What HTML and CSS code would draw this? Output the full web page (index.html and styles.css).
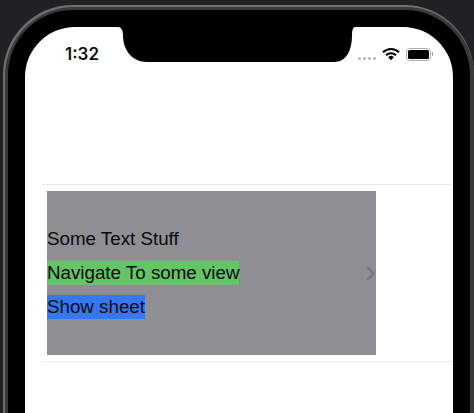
FILE: index.html
```html
<!DOCTYPE html>
<html lang="en">
<head>
<meta charset="utf-8">
<title>List row</title>
<link rel="stylesheet" href="styles.css">
</head>
<body>
<div class="device">
  <div class="bezel">
    <div class="screen">
      <svg class="notch" width="237" height="35" viewBox="0 0 237 35">
        <path d="M0 0H237C235 0 234 3 234 8C234 24 228 35 216 35H29C15 35 5 24 5 8C5 3 3 0 0 0Z" fill="#000"/>
      </svg>
      <div class="status">
        <span class="time">1:32</span>
        <div class="status-icons">
          <div class="signal"><i></i><i></i><i></i><i></i></div>
          <svg class="wifi" width="18" height="14" viewBox="0 0 18 14">
            <path d="M1 5.2A11.5 11.5 0 0 1 17 5.2" fill="none" stroke="#000" stroke-width="2"/>
            <path d="M4 8.2A7.2 7.2 0 0 1 14 8.2" fill="none" stroke="#000" stroke-width="2"/>
            <path d="M6.2 10.2L9 13.2L11.8 10.2A4 4 0 0 0 6.2 10.2Z" fill="#000"/>
          </svg>
          <div class="battery"><div class="battery-fill"></div></div>
          <div class="battery-cap"></div>
        </div>
      </div>
      <div class="list">
        <div class="row">
          <div class="cell">
            <div class="line">Some Text Stuff</div>
            <div class="nav-line">
              <div class="line green">Navigate To some view</div>
              <svg class="chevron" width="9" height="15" viewBox="0 0 9 15">
                <path d="M1.5 1L7.5 7.5L1.5 14" fill="none" stroke="#74747a" stroke-width="2"/>
              </svg>
            </div>
            <div class="line blue">Show sheet</div>
          </div>
        </div>
      </div>
    </div>
  </div>
</div>
</body>
</html>
```

FILE: styles.css
```css
html, body {
  margin: 0;
  height: 413px;
  overflow: hidden;
  background: #212124;
}
.device {
  margin: 5px 0 0 3px;
  width: 471px;
  height: 408px;
  box-sizing: border-box;
  padding: 5px 4px 0 5px;
  border-radius: 70px 70px 0 0;
  background: #39393b;
  box-shadow: inset 1px 1px 0 1px #6e6e71;
}
.bezel {
  height: 100%;
  box-sizing: border-box;
  padding: 17px 17px 0;
  border-radius: 65px 65px 0 0;
  background: #000;
}
.screen {
  position: relative;
  height: 100%;
  background: #fff;
  border-radius: 50px 50px 0 0;
  overflow: hidden;
}
.notch {
  position: absolute;
  top: 0;
  left: 93px;
  display: block;
}
.status {
  position: absolute;
  top: 0;
  left: 0;
  right: 0;
  height: 54px;
  box-sizing: border-box;
  padding: 0 20px 0 40px;
  display: flex;
  align-items: center;
  justify-content: space-between;
  font-family: "Inter", "Liberation Sans", sans-serif;
}
.time {
  font-size: 17px;
  font-weight: 600;
  color: #111;
}
.status-icons {
  display: flex;
  align-items: center;
}
.signal {
  display: flex;
  gap: 2px;
  margin: 8px 6px 0 0;
}
.signal i {
  width: 3px;
  height: 3px;
  border-radius: 50%;
  background: #b9b9bb;
}
.wifi {
  margin-right: 6px;
}
.battery {
  width: 25px;
  height: 13px;
  box-sizing: border-box;
  padding: 1px;
  border: 1.5px solid #adadad;
  border-radius: 3.5px;
}
.battery-fill {
  height: 100%;
  background: #000;
  border-radius: 1.5px;
}
.battery-cap {
  width: 1px;
  height: 4px;
  margin-left: 1px;
  background: #a8a8a8;
}
.list {
  padding: 157px 0 0 17px;
}
.row {
  height: 178px;
  box-sizing: border-box;
  padding: 6px 0 0 5px;
  border-top: 1px solid #e9e9eb;
  border-bottom: 1px solid #e9e9eb;
}
.cell {
  width: 329px;
  height: 164px;
  box-sizing: border-box;
  padding-top: 36px;
  display: flex;
  flex-direction: column;
  gap: 10px;
  background: #8e8e93;
  font-family: "Liberation Sans", sans-serif;
  font-size: 18.75px;
  line-height: 24px;
  color: #0a0a0a;
}
.line {
  width: max-content;
}
.nav-line {
  display: flex;
  align-items: center;
  justify-content: space-between;
  padding-right: 1px;
}
.green {
  background: #65c466;
}
.blue {
  background: #3478f6;
}
.chevron {
  display: block;
}
```
